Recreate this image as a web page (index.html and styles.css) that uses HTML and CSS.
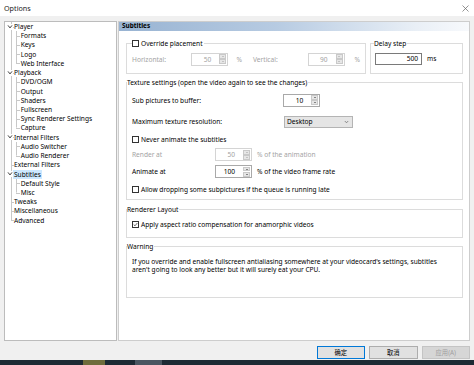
FILE: index.html
```html
<!DOCTYPE html>
<html>
<head>
<meta charset="utf-8">
<title>Options</title>
<link rel="stylesheet" href="styles.css">
</head>
<body>
<div class="titlebar">
  <span class="title">Options</span>
  <svg class="close" viewBox="0 0 7 7" width="7" height="7"><path d="M0.5 0.5 L6.5 6.5 M6.5 0.5 L0.5 6.5" stroke="#666" stroke-width="0.7" fill="none"/></svg>
</div>
<div class="main">
  <div class="tree">
    <ul class="root">
      <li class="top"><div class="node"><svg class="exp" viewBox="0 0 6 6" width="6" height="6"><path d="M1 1.4 L3 3.9 L5 1.4" stroke="#2a2a2a" stroke-width="0.9" fill="none"/></svg>Player</div>
        <ul class="children">
          <li>Formats</li>
          <li>Keys</li>
          <li>Logo</li>
          <li>Web Interface</li>
        </ul>
      </li>
      <li class="top"><div class="node"><svg class="exp" viewBox="0 0 6 6" width="6" height="6"><path d="M1 1.4 L3 3.9 L5 1.4" stroke="#2a2a2a" stroke-width="0.9" fill="none"/></svg>Playback</div>
        <ul class="children">
          <li>DVD/OGM</li>
          <li>Output</li>
          <li>Shaders</li>
          <li>Fullscreen</li>
          <li>Sync Renderer Settings</li>
          <li>Capture</li>
        </ul>
      </li>
      <li class="top"><div class="node"><svg class="exp" viewBox="0 0 6 6" width="6" height="6"><path d="M1 1.4 L3 3.9 L5 1.4" stroke="#2a2a2a" stroke-width="0.9" fill="none"/></svg>Internal Filters</div>
        <ul class="children">
          <li>Audio Switcher</li>
          <li>Audio Renderer</li>
        </ul>
      </li>
      <li class="top leaf"><div class="node">External Filters</div></li>
      <li class="top"><div class="node"><svg class="exp" viewBox="0 0 6 6" width="6" height="6"><path d="M1 1.4 L3 3.9 L5 1.4" stroke="#2a2a2a" stroke-width="0.9" fill="none"/></svg><span class="sel">Subtitles</span></div>
        <ul class="children">
          <li>Default Style</li>
          <li>Misc</li>
        </ul>
      </li>
      <li class="top leaf"><div class="node">Tweaks</div></li>
      <li class="top leaf"><div class="node">Miscellaneous</div></li>
      <li class="top leaf last"><div class="node">Advanced</div></li>
    </ul>
  </div>
  <div class="panel">
    <div class="header">Subtitles</div>
    <div class="content">
      <div class="row-top">
        <fieldset class="group g-override">
          <legend class="lg-check"><span class="cb"></span>Override placement</legend>
          <div class="frow">
            <span class="dis c-hlabel">Horizontal:</span>
            <span class="spin dis w37"><span class="edit">50</span><span class="arrows"><i class="up"></i><i class="dn"></i></span></span>
            <span class="dis c-pct">%</span>
            <span class="dis c-vlabel">Vertical:</span>
            <span class="spin dis w37"><span class="edit">90</span><span class="arrows"><i class="up"></i><i class="dn"></i></span></span>
            <span class="dis c-pct2">%</span>
          </div>
        </fieldset>
        <fieldset class="group g-delay">
          <legend class="lg-delay">Delay step</legend>
          <div class="frow">
            <span class="input">500</span>
            <span class="unit">ms</span>
          </div>
        </fieldset>
      </div>
      <fieldset class="group g-texture">
        <legend class="lg-plain">Texture settings (open the video again to see the changes)</legend>
        <div class="frow r1">
          <span class="c-sublabel">Sub pictures to buffer:</span>
          <span class="spin w37"><span class="edit">10</span><span class="arrows"><i class="up"></i><i class="dn"></i></span></span>
        </div>
        <div class="frow r2">
          <span class="c-sublabel">Maximum texture resolution:</span>
          <span class="combo"><span>Desktop</span><svg viewBox="0 0 5 4" width="5" height="4"><path d="M0.8 1 L2.5 2.8 L4.2 1" stroke="#666" stroke-width="0.7" fill="none"/></svg></span>
        </div>
        <div class="frow r3"><span class="cb"></span>Never animate the subtitles</div>
        <div class="frow r4">
          <span class="dis c-render">Render at</span>
          <span class="spin dis w37"><span class="edit">50</span><span class="arrows"><i class="up"></i><i class="dn"></i></span></span>
          <span class="dis c-after">% of the animation</span>
        </div>
        <div class="frow r5">
          <span class="c-render">Animate at</span>
          <span class="spin w37"><span class="edit">100</span><span class="arrows"><i class="up"></i><i class="dn"></i></span></span>
          <span class="c-after">% of the video frame rate</span>
        </div>
        <div class="frow r6"><span class="cb"></span>Allow dropping some subpictures if the queue is running late</div>
      </fieldset>
      <fieldset class="group g-renderer">
        <legend class="lg-plain">Renderer Layout</legend>
        <div class="frow"><span class="cb checked"><svg viewBox="0 0 6 6" width="5" height="5"><path d="M0.8 3 L2.4 4.6 L5.2 1.2" stroke="#222" stroke-width="0.8" fill="none"/></svg></span>Apply aspect ratio compensation for anamorphic videos</div>
      </fieldset>
      <fieldset class="group g-warning">
        <legend class="lg-plain">Warning</legend>
        <p class="warn">If you override and enable fullscreen antialiasing somewhere at your videocard's settings, subtitles<br>aren't going to look any better but it will surely eat your CPU.</p>
      </fieldset>
    </div>
  </div>
</div>
<div class="footer">
  <span class="btn default">确定</span>
  <span class="btn">取消</span>
  <span class="btn disabled">应用(A)</span>
</div>
<div class="taskbar">
  <span class="tb-a"></span>
  <span class="tb-b"></span>
</div>
</body>
</html>
```

FILE: styles.css
```css
* { box-sizing: border-box; }
html, body { margin: 0; padding: 0; }
body {
  width: 474px;
  height: 365px;
  overflow: hidden;
  background: #f0f0f0;
  font-family: "Noto Sans", "Noto Sans CJK SC", sans-serif;
  font-size: 6.6px;
  color: #000;
  display: flex;
  flex-direction: column;
}
.titlebar {
  flex: none;
  height: 16px;
  background: #fff;
  display: flex;
  align-items: center;
  justify-content: space-between;
  padding: 0 5px 0 4px;
}
.title { color: #222; font-size: 7.2px; }
.close { display: block; }

.main {
  flex: none;
  height: 325px;
  display: flex;
  gap: 1px;
  padding: 5px 4px 0 4px;
}
.tree {
  width: 113px;
  flex: none;
  background: #fff;
  border: 1px solid #bcbcbc;
}
.tree ul { list-style: none; margin: 0; padding: 0; }
.tree .root { padding-left: 6px; }
.tree .top {
  padding-left: 3px;
  background:
    linear-gradient(#c8c8c8, #c8c8c8) no-repeat 0 0 / 1px 100%,
    linear-gradient(#c8c8c8, #c8c8c8) no-repeat 0 4.6px / 3px 1px;
}
.tree .top.last {
  background:
    linear-gradient(#c8c8c8, #c8c8c8) no-repeat 0 0 / 1px 4.6px,
    linear-gradient(#c8c8c8, #c8c8c8) no-repeat 0 4.6px / 3px 1px;
}
.node {
  height: 9.22px;
  line-height: 9.22px;
  display: flex;
  align-items: center;
  white-space: nowrap;
}
.exp {
  display: block;
  flex: none;
  width: 6px;
  height: 6px;
  margin-left: -7px;
  margin-right: 1px;
  background: #fff;
}
.sel {
  background: #cce8ff;
  margin-left: -1px;
  padding: 0 1px;
  line-height: 9px;
}
.tree .children { margin-left: 2px; }
.tree .children li {
  height: 9.22px;
  line-height: 9.22px;
  padding-left: 4.7px;
  white-space: nowrap;
  background:
    linear-gradient(#c8c8c8, #c8c8c8) no-repeat 0 0 / 1px 100%,
    linear-gradient(#c8c8c8, #c8c8c8) no-repeat 0 4.6px / 4px 1px;
}
.tree .children li:last-child {
  background:
    linear-gradient(#c8c8c8, #c8c8c8) no-repeat 0 0 / 1px 4.6px,
    linear-gradient(#c8c8c8, #c8c8c8) no-repeat 0 4.6px / 4px 1px;
}

.panel {
  flex: 1;
  background: #fff;
  border: 1px solid #cdcdcd;
  display: flex;
  flex-direction: column;
}
.header {
  flex: none;
  height: 8.5px;
  line-height: 8.5px;
  padding-left: 3px;
  font-weight: bold;
  font-size: 6.4px;
  background: linear-gradient(to right, #98b3d2 0%, #b7cbe2 45%, #e9eff6 85%, #f7f9fc 100%);
}
.content {
  padding: 8px 6px 0 7px;
  display: flex;
  flex-direction: column;
}
.group {
  margin: 0;
  padding: 0 5px;
  border: 1px solid #dcdcdc;
  min-inline-size: 0;
}
.group legend {
  padding: 0 1px 0 0;
  height: 9px;
  line-height: 9px;
  display: flex;
  align-items: center;
  white-space: nowrap;
}
.lg-plain { margin-left: -5px; }
.lg-delay { margin-left: -1px; }
.lg-check { margin-left: 0; }

.row-top { display: flex; gap: 4px; }
.g-override { width: 240px; padding-top: 5px; padding-bottom: 7px; }
.g-delay { flex: 1; padding: 4.5px 4px 7.5px 4px; }

.frow {
  display: flex;
  align-items: center;
  white-space: nowrap;
  height: 13px;
}
.dis { color: #a3a3a3; }
.c-hlabel { width: 59.7px; }
.c-pct { width: 16.6px; margin-left: 8.3px; }
.c-vlabel { width: 55px; }
.c-pct2 { margin-left: 10px; }

.spin {
  display: flex;
  height: 13px;
  border: 1px solid #a9a9a9;
  background: #fff;
  color: #000;
}
.spin.dis { border-color: #d4d4d4; color: #a3a3a3; }
.w37 { width: 37px; }
.edit {
  flex: 1;
  text-align: right;
  padding-right: 8px;
  line-height: 11px;
}
.arrows {
  width: 8px;
  display: flex;
  flex-direction: column;
  gap: 0.5px;
  padding: 0.5px 1px 0.5px 0;
}
.arrows i {
  flex: 1;
  background: #e6e6e6;
  border: 0.5px solid #c9c9c9;
  display: flex;
  align-items: center;
  justify-content: center;
}
.arrows i::after {
  content: "";
  width: 0;
  height: 0;
  border-left: 1.6px solid transparent;
  border-right: 1.6px solid transparent;
}
.arrows .up::after { border-bottom: 1.8px solid #222; }
.arrows .dn::after { border-top: 1.8px solid #222; }
.spin.dis .arrows .up::after { border-bottom-color: #a0a0a0; }
.spin.dis .arrows .dn::after { border-top-color: #a0a0a0; }

.input {
  width: 47px;
  height: 12px;
  border: 1px solid #7a7a7a;
  text-align: right;
  padding-right: 3px;
  line-height: 10px;
}
.unit { margin-left: 5px; }

.cb {
  flex: none;
  width: 7px;
  height: 7px;
  border: 1px solid #333;
  background: #fff;
  margin-right: 2px;
  display: flex;
  align-items: center;
  justify-content: center;
}

.g-texture { margin-top: 4px; padding-top: 7px; padding-bottom: 3.7px; }
.c-sublabel { width: 151.3px; }
.r2 { margin-top: 8.7px; }
.r3 { margin-top: 4.6px; }
.r4 { margin-top: 2.7px; }
.r5 { margin-top: 3.7px; }
.r6 { margin-top: 4.6px; }
.combo {
  width: 69.3px;
  height: 12px;
  margin-left: 0.7px;
  background: #e5e5e5;
  border: 1px solid #b4b4b4;
  display: flex;
  align-items: center;
  justify-content: space-between;
  padding: 0 3px 0 2px;
}
.c-render { width: 83px; }
.c-after { margin-left: 5px; }

.g-renderer { margin-top: 4.3px; padding-top: 4.7px; padding-bottom: 5.7px; }
.g-warning { margin-top: 4px; padding-top: 6.5px; height: 55.6px; }
.warn {
  margin: 0;
  line-height: 8px;
  white-space: nowrap;
}

.footer {
  flex: none;
  height: 19px;
  display: flex;
  justify-content: flex-end;
  gap: 4px;
  padding: 5px 4px 1px 4px;
}
.btn {
  width: 48.5px;
  height: 13px;
  border: 1px solid #adadad;
  background: #e1e1e1;
  font-size: 6.3px;
  display: flex;
  align-items: center;
  justify-content: center;
}
.btn.default { border-color: #0078d7; }
.btn.disabled { color: #a0a0a0; border-color: #c4c4c4; background: #d6d6d6; }

.taskbar {
  flex: 1;
  background: #1d2a34;
  display: flex;
}
.tb-a { width: 22px; margin-left: 83px; background: #6f6c3c; }
.tb-b { width: 27px; margin-left: 30px; background: #4a5661; }
```
